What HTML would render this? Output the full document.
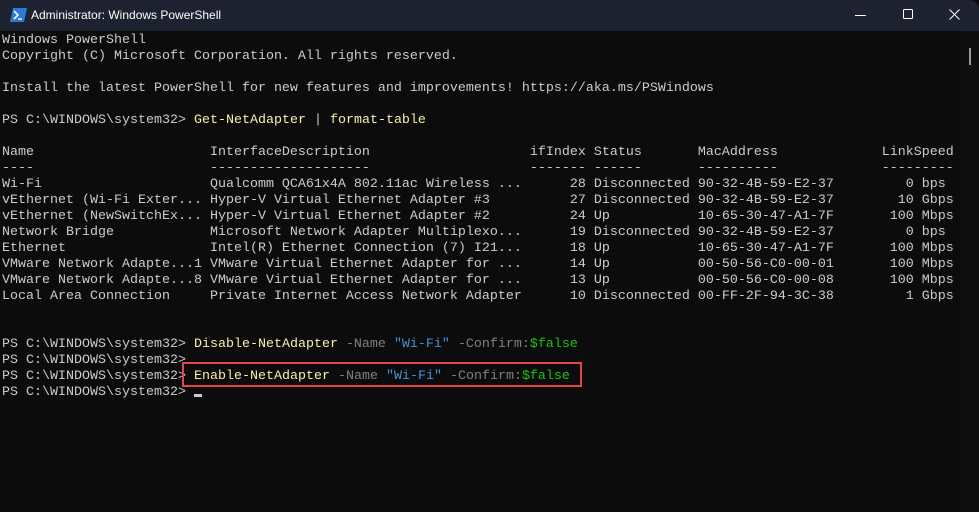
<!DOCTYPE html>
<html><head><meta charset="utf-8"><style>
body{margin:0;width:979px;height:512px;overflow:hidden;background:#0c0c0c;position:relative}
.tb{position:absolute;left:0;top:0;width:979px;height:31px;background:#1d2130;border-top-right-radius:10px}
.tt{position:absolute;left:31px;top:8px;font:12px "Liberation Sans",sans-serif;color:#fff}
pre{position:absolute;left:2px;top:33px;margin:0;font:13.33px/16px "Liberation Mono",monospace;color:#cccccc}
.y{color:#f9f1a5}.g{color:#808080}.b{color:#3a96dd}.gr{color:#16c60c}
.box{position:absolute;left:182px;top:362px;width:396px;height:21px;border:2px solid #e0474c}
.cur{display:inline-block;width:8px;height:3px;background:#ccc;vertical-align:-2px}
.sb{position:absolute;left:962px;top:31px;width:17px;height:481px;background:#0e0e0e}
.th{position:absolute;left:969px;top:48px;width:2px;height:17px;background:#9a9a9a}
</style></head><body>
<div class="tb">
<svg style="position:absolute;left:10px;top:8px" width="17" height="14" viewBox="0 0 17 14"><polygon points="3,0 17,0 14,14 0,14" fill="#2b7ad6"/><polyline points="4,3 8,7 4,11" fill="none" stroke="#fff" stroke-width="1.6"/><line x1="8" y1="11" x2="12" y2="11" stroke="#fff" stroke-width="1.4"/></svg>
<div class="tt">Administrator: Windows PowerShell</div>
<svg style="position:absolute;left:855px;top:10px" width="12" height="12"><line x1="0" y1="5.5" x2="11" y2="5.5" stroke="#fff"/></svg>
<svg style="position:absolute;left:903px;top:9px" width="12" height="12"><rect x="0.5" y="0.5" width="9" height="9" rx="1" fill="none" stroke="#fff"/></svg>
<svg style="position:absolute;left:949px;top:9px" width="12" height="12"><path d="M0.5 0.5L10.5 10.5M10.5 0.5L0.5 10.5" stroke="#fff"/></svg>
</div>
<div class="sb"></div><div class="th"></div>
<pre>Windows PowerShell
Copyright (C) Microsoft Corporation. All rights reserved.

Install the latest PowerShell for new features and improvements! https://aka.ms/PSWindows

PS C:\WINDOWS\system32&gt; <span class="y">Get-NetAdapter</span> | <span class="y">format-table</span>

Name                      InterfaceDescription                    ifIndex Status       MacAddress             LinkSpeed
----                      --------------------                    ------- ------       ----------             ---------
Wi-Fi                     Qualcomm QCA61x4A 802.11ac Wireless ...      28 Disconnected 90-32-4B-59-E2-37         0 bps
vEthernet (Wi-Fi Exter... Hyper-V Virtual Ethernet Adapter #3          27 Disconnected 90-32-4B-59-E2-37        10 Gbps
vEthernet (NewSwitchEx... Hyper-V Virtual Ethernet Adapter #2          24 Up           10-65-30-47-A1-7F       100 Mbps
Network Bridge            Microsoft Network Adapter Multiplexo...      19 Disconnected 90-32-4B-59-E2-37         0 bps
Ethernet                  Intel(R) Ethernet Connection (7) I21...      18 Up           10-65-30-47-A1-7F       100 Mbps
VMware Network Adapte...1 VMware Virtual Ethernet Adapter for ...      14 Up           00-50-56-C0-00-01       100 Mbps
VMware Network Adapte...8 VMware Virtual Ethernet Adapter for ...      13 Up           00-50-56-C0-00-08       100 Mbps
Local Area Connection     Private Internet Access Network Adapter      10 Disconnected 00-FF-2F-94-3C-38         1 Gbps


PS C:\WINDOWS\system32&gt; <span class="y">Disable-NetAdapter</span> <span class="g">-Name</span> <span class="b">"Wi-Fi"</span> <span class="g">-Confirm:</span><span class="gr">$false</span>
PS C:\WINDOWS\system32&gt;
PS C:\WINDOWS\system32&gt; <span class="y">Enable-NetAdapter</span> <span class="g">-Name</span> <span class="b">"Wi-Fi"</span> <span class="g">-Confirm:</span><span class="gr">$false</span>
PS C:\WINDOWS\system32&gt; <span class="cur"></span></pre>
<div class="box"></div>
</body></html>
